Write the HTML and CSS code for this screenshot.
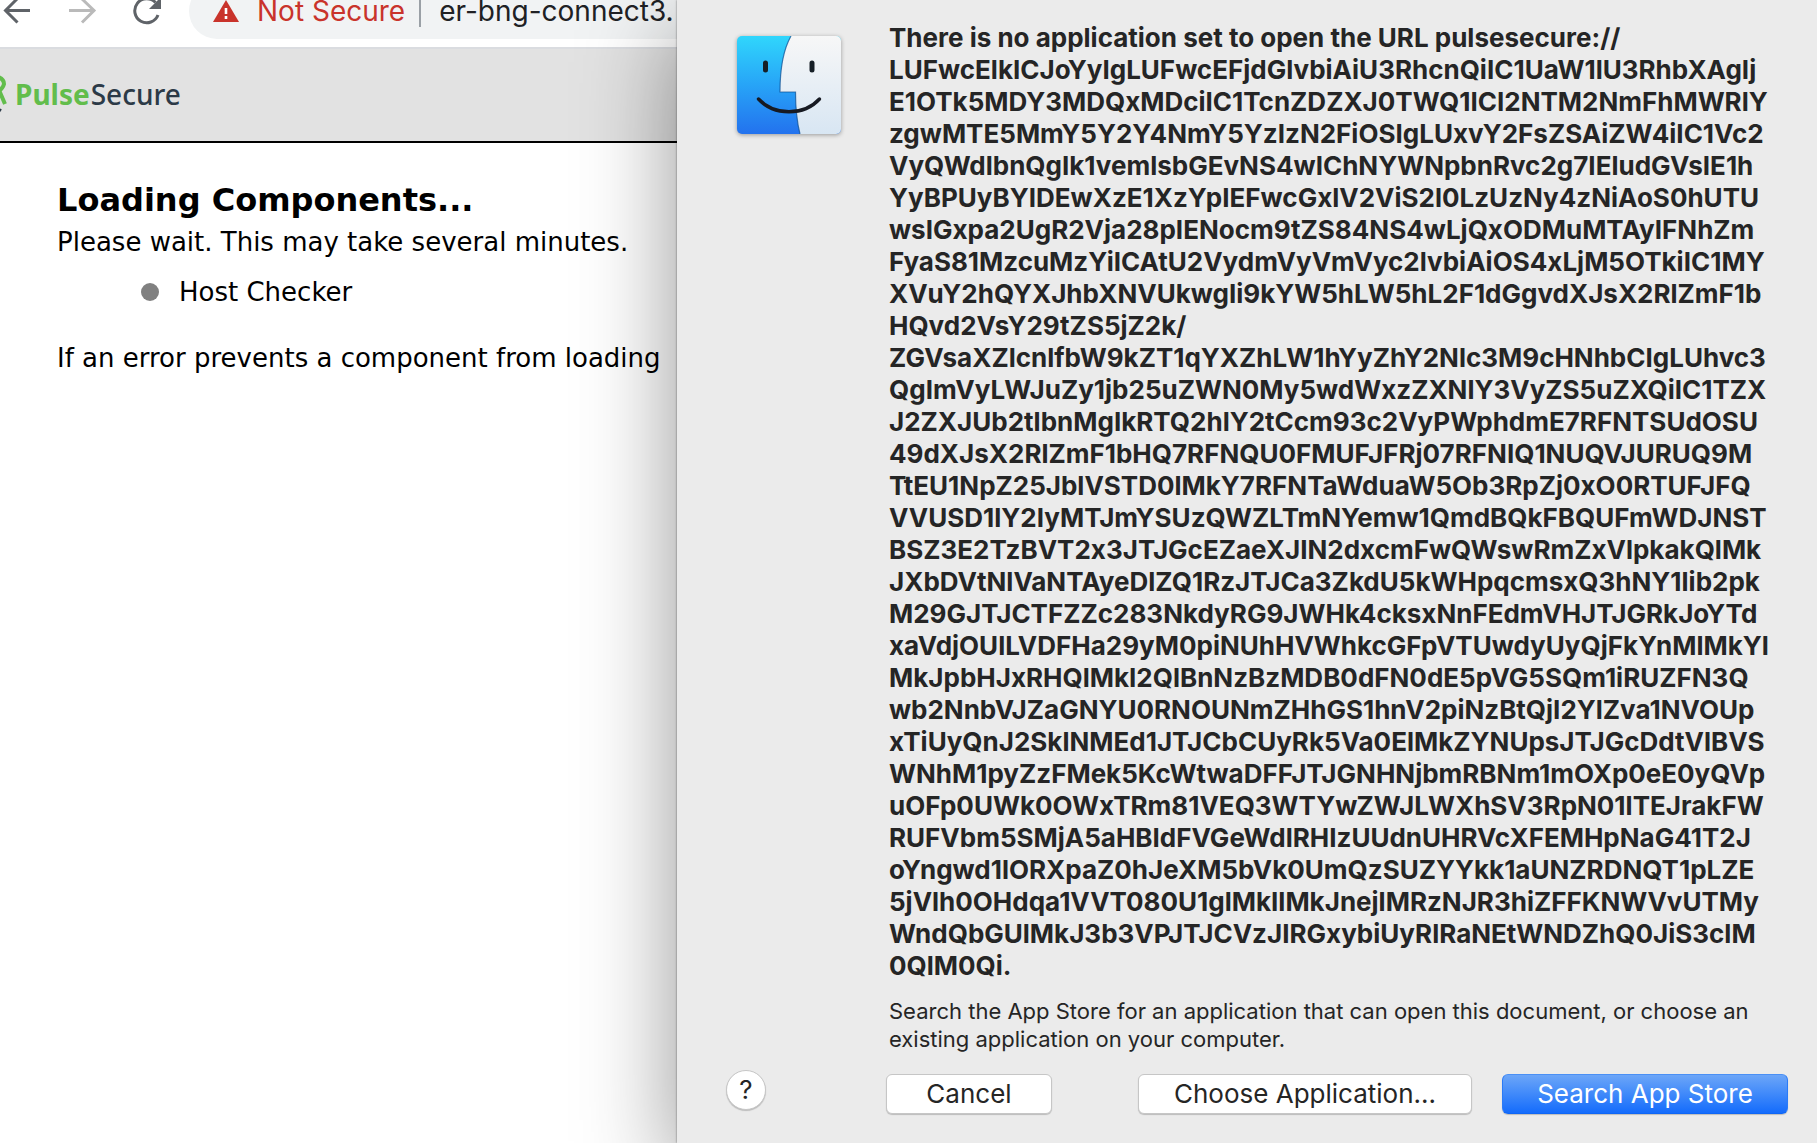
FILE: index.html
```html
<!DOCTYPE html>
<html lang="en">
<head>
<meta charset="utf-8">
<title>Loading Components</title>
<link rel="stylesheet" href="styles.css">
</head>
<body>
<div class="screen">
  <div class="browser">
    <div class="toolbar">
      <button class="nav" type="button" aria-label="Back">
        <svg width="32" height="32" viewBox="0 0 32 32" fill="none" stroke="#5f6368" stroke-width="3"><path d="M30 15.500H5.500M17 4L5.500 15.500l12 12"/></svg>
      </button>
      <button class="nav" type="button" aria-label="Forward">
        <svg width="32" height="32" viewBox="0 0 32 32" fill="none" stroke="#bababa" stroke-width="3"><path d="M4 15.500h25M17 4l12 11.500-12 12"/></svg>
      </button>
      <button class="nav" type="button" aria-label="Reload">
        <svg width="32" height="32" viewBox="0 0 32 32"><path d="M28 20A12 12 0 1 1 25.500 7.500" fill="none" stroke="#5f6368" stroke-width="3"/><path d="M31 2v12H19z" fill="#5f6368"/></svg>
      </button>
      <div class="address">
        <svg width="26" height="24" viewBox="0 0 26 24"><path d="M13 1l13 22H0z" fill="#c9332b"/><path d="M13 9v6M13 17v3" stroke="#fff" stroke-width="2.600"/></svg>
        <span class="warning">Not Secure</span>
        <span class="divider"></span>
        <span class="url">er-bng-connect3.</span>
      </div>
    </div>
    <header class="brand">
      <svg class="mark" width="7" height="40" viewBox="0 0 7 40"><path d="M-2 2Q4 4 4 9Q3 13-2 17M-1 15L5 29" fill="none" stroke="#62bd4c" stroke-width="4"/><path d="M-1 37l2-3" stroke="#2c3a47" stroke-width="2"/></svg>
      <span class="pulse">Pulse</span><span class="secure">Secure</span>
    </header>
    <main class="content">
      <h1>Loading Components...</h1>
      <p>Please wait. This may take several minutes.</p>
      <ul><li>Host Checker</li></ul>
      <p>If an error prevents a component from loading</p>
    </main>
  </div>
  <section class="dialog" role="dialog" aria-labelledby="message">
    <svg class="finder" width="104" height="98" viewBox="0 0 104 98">
      <defs>
        <linearGradient id="blue" x2="0" y2="1"><stop stop-color="#30d6fc"/><stop offset=".5" stop-color="#27a4f7"/><stop offset="1" stop-color="#2372ee"/></linearGradient>
        <linearGradient id="pale" x2="0" y2="1"><stop stop-color="#f7f7f7"/><stop offset="1" stop-color="#d8e6f3"/></linearGradient>
        <clipPath id="tile"><rect width="104" height="98" rx="5"/></clipPath>
      </defs>
      <g clip-path="url(#tile)">
        <path d="M0 0h104v98H0z" fill="url(#blue)"/>
        <path d="M54 0C45 16 43 38 43 56h15.500C58.500 72 60 86 63 98h41V0z" fill="url(#pale)"/>
        <path d="M54 0C45 16 43 38 43 56h15.500C58.500 72 60 86 63 98" fill="none" stroke="#0a4d92" stroke-opacity=".7" stroke-width="1.200"/>
      </g>
      <path d="M28.500 27v7M75 27v7" stroke="#161f26" stroke-width="5" stroke-linecap="round"/>
      <path d="M21.500 63C37 80 67 80 82.500 63" fill="none" stroke="#171a22" stroke-width="3.400" stroke-linecap="round"/>
    </svg>
    <div class="text">
      <h2 id="message">There is no application set to open the URL pulsesecure://<br>
LUFwcElkICJoYyIgLUFwcEFjdGlvbiAiU3RhcnQiIC1UaW1lU3RhbXAgIj<br>
E1OTk5MDY3MDQxMDciIC1TcnZDZXJ0TWQ1ICI2NTM2NmFhMWRlY<br>
zgwMTE5MmY5Y2Y4NmY5YzIzN2FiOSIgLUxvY2FsZSAiZW4iIC1Vc2<br>
VyQWdlbnQgIk1vemlsbGEvNS4wIChNYWNpbnRvc2g7IEludGVsIE1h<br>
YyBPUyBYIDEwXzE1XzYpIEFwcGxlV2ViS2l0LzUzNy4zNiAoS0hUTU<br>
wsIGxpa2UgR2Vja28pIENocm9tZS84NS4wLjQxODMuMTAyIFNhZm<br>
FyaS81MzcuMzYiICAtU2VydmVyVmVyc2lvbiAiOS4xLjM5OTkiIC1MY<br>
XVuY2hQYXJhbXNVUkwgIi9kYW5hLW5hL2F1dGgvdXJsX2RlZmF1b<br>
HQvd2VsY29tZS5jZ2k/<br>
ZGVsaXZlcnlfbW9kZT1qYXZhLW1hYyZhY2Nlc3M9cHNhbCIgLUhvc3<br>
QgImVyLWJuZy1jb25uZWN0My5wdWxzZXNlY3VyZS5uZXQiIC1TZX<br>
J2ZXJUb2tlbnMgIkRTQ2hlY2tCcm93c2VyPWphdmE7RFNTSUdOSU<br>
49dXJsX2RlZmF1bHQ7RFNQU0FMUFJFRj07RFNIQ1NUQVJURUQ9M<br>
TtEU1NpZ25JblVSTD0lMkY7RFNTaWduaW5Ob3RpZj0xO0RTUFJFQ<br>
VVUSD1lY2IyMTJmYSUzQWZLTmNYemw1QmdBQkFBQUFmWDJNST<br>
BSZ3E2TzBVT2x3JTJGcEZaeXJIN2dxcmFwQWswRmZxVlpkakQlMk<br>
JXbDVtNlVaNTAyeDlZQ1RzJTJCa3ZkdU5kWHpqcmsxQ3hNY1lib2pk<br>
M29GJTJCTFZZc283NkdyRG9JWHk4cksxNnFEdmVHJTJGRkJoYTd<br>
xaVdjOUlLVDFHa29yM0piNUhHVWhkcGFpVTUwdyUyQjFkYnMlMkYl<br>
MkJpbHJxRHQlMkI2QlBnNzBzMDB0dFN0dE5pVG5SQm1iRUZFN3Q<br>
wb2NnbVJZaGNYU0RNOUNmZHhGS1hnV2piNzBtQjI2YlZva1NVOUp<br>
xTiUyQnJ2SklNMEd1JTJCbCUyRk5Va0ElMkZYNUpsJTJGcDdtVlBVS<br>
WNhM1pyZzFMek5KcWtwaDFFJTJGNHNjbmRBNm1mOXp0eE0yQVp<br>
uOFp0UWk0OWxTRm81VEQ3WTYwZWJLWXhSV3RpN01lTEJrakFW<br>
RUFVbm5SMjA5aHBIdFVGeWdlRHIzUUdnUHRVcXFEMHpNaG41T2J<br>
oYngwd1lORXpaZ0hJeXM5bVk0UmQzSUZYYkk1aUNZRDNQT1pLZE<br>
5jVlh0OHdqa1VVT080U1glMkIlMkJnejlMRzNJR3hiZFFKNWVvUTMy<br>
WndQbGUlMkJ3b3VPJTJCVzJIRGxybiUyRlRaNEtWNDZhQ0JiS3clM<br>
0QlM0Qi.</h2>
      <p>Search the App Store for an application that can open this document, or choose an<br>existing application on your computer.</p>
    </div>
    <div class="actions">
      <button class="help" type="button">?</button>
      <button class="btn cancel" type="button">Cancel</button>
      <button class="btn choose" type="button">Choose Application...</button>
      <button class="btn primary" type="button">Search App Store</button>
    </div>
  </section>
</div>
</body>
</html>
```
FILE: styles.css
```css
* { box-sizing: border-box; }

body {
  margin: 0;
  background: #fff;
  font-family: Inter, "Liberation Sans", sans-serif;
  font-variant-ligatures: no-contextual;
}

h1, h2, p, ul { margin: 0; }

.screen {
  display: grid;
  grid-template-columns: 677fr 1140fr;
  min-height: 100vh;
  overflow: hidden;
}

.browser {
  min-width: 0;
  overflow: hidden;
  white-space: nowrap;
}

.toolbar {
  display: flex;
  align-items: flex-end;
  height: 49px;
  padding-bottom: 8px;
  border-bottom: 2px solid #dadce0;
  overflow: hidden;
}

.nav {
  flex: none;
  display: flex;
  align-items: center;
  width: 65px;
  height: 56px;
  padding: 0;
  border: 0;
  background: none;
}

.address {
  flex: 1;
  display: flex;
  align-items: center;
  height: 56px;
  margin-left: -6px;
  padding-left: 24px;
  border-radius: 28px 0 0 28px;
  background: #f1f3f4;
  font-size: 28px;
  line-height: 22px;
}

.warning { margin-left: 18px; color: #c9332b; }

.divider {
  width: 2px;
  height: 32px;
  margin: 0 18px 0 14px;
  background: #9aa0a6;
}

.url { color: #202124; }

.brand {
  display: flex;
  align-items: center;
  height: 94px;
  border-bottom: 2px solid #000;
  background: #e2e2e2;
  font-family: "Noto Sans", sans-serif;
  font-size: 28px;
  line-height: 36px;
}

.brand span { padding-bottom: 3px; }
.mark { margin-right: 8px; }
.pulse { color: #62bd4c; font-weight: 700; }
.brand .secure { margin-left: 1px; color: #2c3a47; font-weight: 500; }

.content {
  padding: 36px 0 0 57px;
  color: #000;
  font-family: Verdana, "DejaVu Sans", sans-serif;
  font-size: 26px;
  line-height: 40px;
}

.content h1 {
  margin-bottom: 1px;
  font-size: 32px;
  line-height: 42px;
}

.content ul {
  margin: 10px 0 26px;
  padding-left: 84px;
  list-style: none;
}

.content li {
  display: flex;
  align-items: center;
  gap: 20px;
}

.content li::before {
  content: "";
  width: 18px;
  height: 18px;
  border-radius: 50%;
  background: #808080;
}

.dialog {
  position: relative;
  display: grid;
  grid-template-columns: 152px 1fr;
  grid-template-rows: auto 1fr;
  padding: 22px 29px 29px 60px;
  background: #ebebeb;
  box-shadow: 0 0 2px rgba(0, 0, 0, .5), 0 30px 90px rgba(0, 0, 0, .42);
  color: #252525;
  white-space: nowrap;
}

.finder {
  margin-top: 14px;
  filter: drop-shadow(0 1px 2px rgba(0, 0, 0, .35));
}

.text h2 {
  font-size: 26px;
  line-height: 32px;
}

.text p {
  margin-top: 15px;
  font-size: 22px;
  line-height: 28px;
}

.actions {
  grid-column: 1 / -1;
  display: flex;
  align-items: flex-start;
  align-self: start;
  margin: 17px 0 0 -11px;
}

.actions button {
  flex: none;
  height: 40px;
  padding: 0;
  border: 1px solid #c6c6c6;
  background: #fff;
  box-shadow: 0 1px 1px rgba(0, 0, 0, .2);
  color: #252525;
  font-family: inherit;
  font-size: 26px;
  line-height: 32px;
}

.actions .help {
  width: 40px;
  margin-right: 120px;
  border-radius: 50%;
}

.actions .btn { margin-top: 4px; border-radius: 6px; }
.actions .cancel { width: 166px; margin-right: auto; }
.actions .choose { width: 334px; margin-right: 30px; }

.actions .primary {
  width: 286px;
  border-color: #4a90f5 #2a7bf8 #0f66f5;
  background: linear-gradient(#6ca6f8, #146cfc);
  color: #fff;
}
```
